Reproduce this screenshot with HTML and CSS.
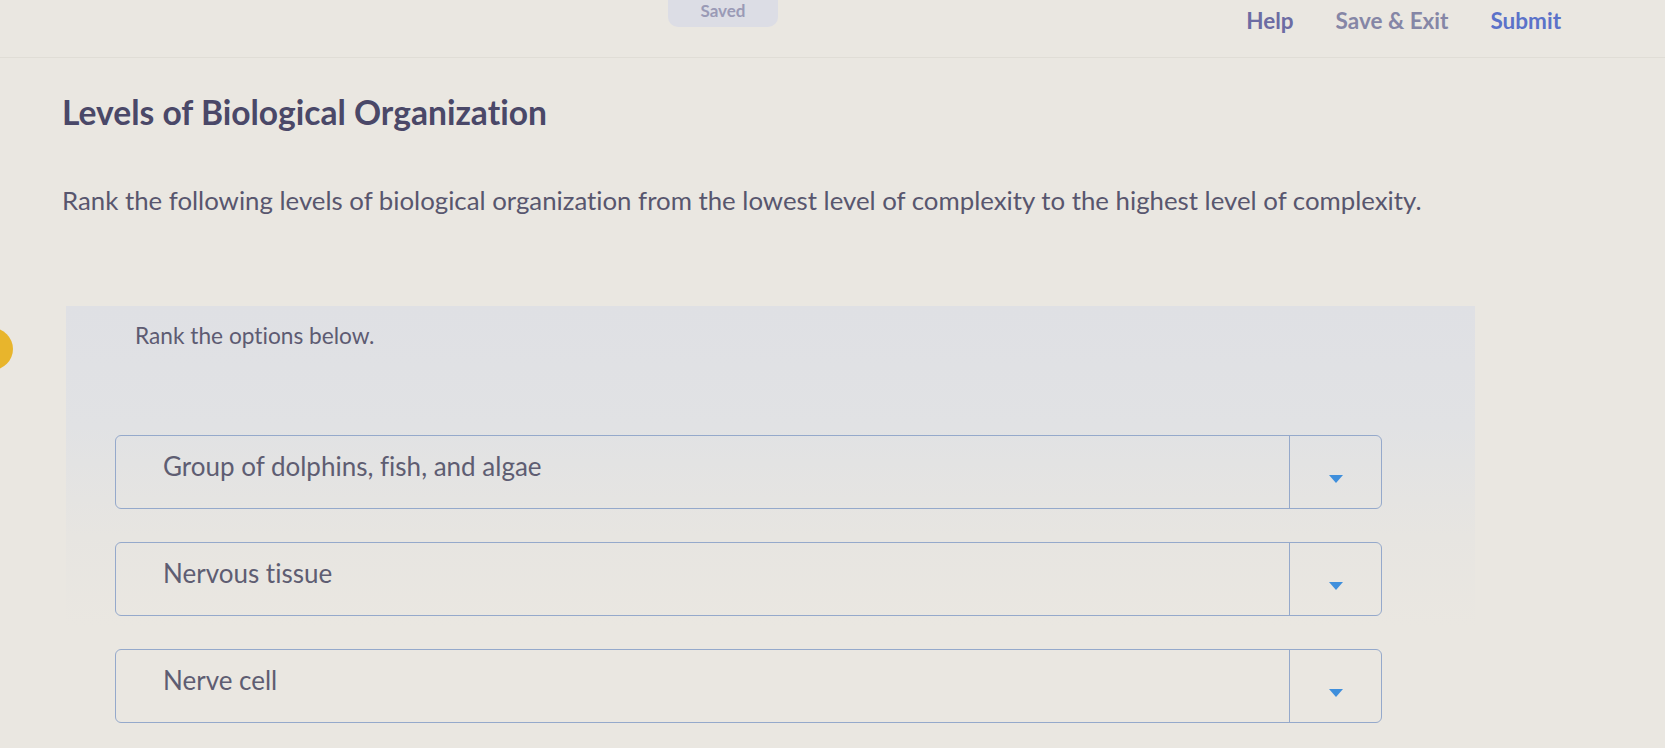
FILE: index.html
```html
<!DOCTYPE html>
<html lang="en">
<head>
<meta charset="utf-8">
<title>Levels of Biological Organization</title>
<link rel="stylesheet" href="styles.css">
</head>
<body>
<div class="page">
  <header class="topbar">
    <div class="saved">Saved</div>
    <nav class="nav">
      <a class="nav-link help" href="#">Help</a>
      <a class="nav-link save" href="#">Save &amp; Exit</a>
      <a class="nav-link submit" href="#">Submit</a>
    </nav>
  </header>
  <span class="marker"></span>
  <main class="content">
    <h1 class="title">Levels of Biological Organization</h1>
    <p class="prompt">Rank the following levels of biological organization from the lowest level of complexity to the highest level of complexity.</p>
    <section class="panel">
      <p class="panel-label">Rank the options below.</p>
      <ul class="options">
        <li class="option">
          <span class="option-text">Group of dolphins, fish, and algae</span>
          <span class="option-drop"><svg class="caret" width="14" height="8" viewBox="0 0 14 8"><polygon points="0,0 14,0 7,8" fill="#3f8fdc"/></svg></span>
        </li>
        <li class="option">
          <span class="option-text">Nervous tissue</span>
          <span class="option-drop"><svg class="caret" width="14" height="8" viewBox="0 0 14 8"><polygon points="0,0 14,0 7,8" fill="#3f8fdc"/></svg></span>
        </li>
        <li class="option">
          <span class="option-text">Nerve cell</span>
          <span class="option-drop"><svg class="caret" width="14" height="8" viewBox="0 0 14 8"><polygon points="0,0 14,0 7,8" fill="#3f8fdc"/></svg></span>
        </li>
      </ul>
    </section>
  </main>
</div>
</body>
</html>
```

FILE: styles.css
```css
* { box-sizing: border-box; }

html, body {
  margin: 0;
  padding: 0;
  height: 100%;
  overflow: hidden;
}

body {
  background: #eae7e1;
  font-family: Lato, "Open Sans", "Liberation Sans", sans-serif;
  font-variant-ligatures: none;
  color: #56546c;
}

.page {
  position: relative;
  height: 748px;
}

.topbar {
  display: flex;
  align-items: flex-start;
  height: 58px;
  border-bottom: 1px solid #e0ddd6;
}

.saved {
  margin-left: 668px;
  width: 110px;
  height: 27px;
  border-radius: 0 0 10px 10px;
  background: #dcdde5;
  color: #9a9ab6;
  font-size: 17px;
  font-weight: 700;
  text-align: center;
  line-height: 20px;
  padding-top: 1px;
}

.nav {
  margin-left: auto;
  margin-right: 104px;
  display: flex;
  gap: 42px;
  padding-top: 8px;
}

.nav-link {
  font-size: 22.5px;
  font-weight: 700;
  line-height: 26px;
  text-decoration: none;
}

.help { color: #6c6ca3; }
.save { color: #8586a6; }
.submit { color: #5b72c9; }

.marker {
  position: absolute;
  left: -29px;
  top: 328px;
  width: 42px;
  height: 42px;
  border-radius: 50%;
  background: #e8b52c;
}

.content {
  padding-left: 62px;
}

.title {
  margin: 34px 0 0;
  font-size: 33.6px;
  line-height: 40px;
  font-weight: 700;
  color: #4a4868;
}

.prompt {
  margin: 52px 0 0;
  font-size: 25.8px;
  line-height: 32px;
  color: #58566e;
}

.panel {
  margin: 90px 0 0 4px;
  width: 1409px;
  height: 450px;
  padding: 16px 0 0 69px;
  background: linear-gradient(to bottom, #dfe0e4 0px, #e1e2e4 120px, #e7e5e1 230px, #eae7e1 320px);
}

.panel-label {
  margin: 0;
  font-size: 22.7px;
  line-height: 28px;
  color: #5d5b72;
}

.options {
  list-style: none;
  margin: 85px 0 0 -20px;
  padding: 0;
  display: flex;
  flex-direction: column;
  gap: 33px;
  width: 1267px;
}

.option {
  display: flex;
  height: 74px;
  border: 1.5px solid #95a9cb;
  border-radius: 6px;
}

.option-text {
  flex: 1;
  padding: 14px 0 0 47px;
  font-size: 26px;
  line-height: 32px;
  color: #5e5d72;
}

.option-drop {
  width: 92px;
  border-left: 1.5px solid #95a9cb;
  display: flex;
  align-items: center;
  justify-content: center;
  padding-top: 14px;
}

.caret { display: block; }
```
